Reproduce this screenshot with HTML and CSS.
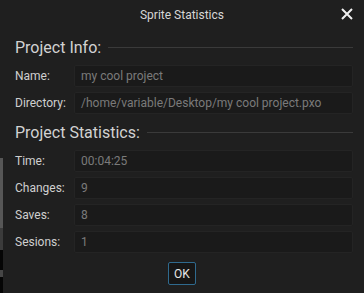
FILE: index.html
```html
<!DOCTYPE html>
<html lang="en">
<head>
    <meta charset="UTF-8">
    <meta name="viewport" content="width=device-width, initial-scale=1.0">
    <title>Sprite Statistics</title>
    <link rel="stylesheet" href="styles.css">
</head>
<body>
    <!-- Кусок окна за диалогом -->
    <div class="backdrop-edge"></div>

    <div class="dialog">
        <div class="dialog-header">
            <span class="dialog-title">Sprite Statistics</span>
            <svg class="close-btn" width="12" height="12" viewBox="0 0 12 12">
                <path d="M1 1 L11 11 M11 1 L1 11" stroke="#f0f0f0" stroke-width="2"/>
            </svg>
        </div>

        <div class="dialog-body">
            <div class="section-title"><span>Project Info:</span></div>
            <div class="field-list">
                <div class="field">
                    <div class="field-label">Name:</div>
                    <div class="field-value">my cool project</div>
                </div>
                <div class="field">
                    <div class="field-label">Directory:</div>
                    <div class="field-value">/home/variable/Desktop/my cool project.pxo</div>
                </div>
            </div>

            <div class="section-title"><span>Project Statistics:</span></div>
            <div class="field-list">
                <div class="field">
                    <div class="field-label">Time:</div>
                    <div class="field-value">00:04:25</div>
                </div>
                <div class="field">
                    <div class="field-label">Changes:</div>
                    <div class="field-value">9</div>
                </div>
                <div class="field">
                    <div class="field-label">Saves:</div>
                    <div class="field-value">8</div>
                </div>
                <div class="field">
                    <div class="field-label">Sesions:</div>
                    <div class="field-value">1</div>
                </div>
            </div>

            <div class="dialog-footer">
                <button class="ok-btn">OK</button>
            </div>
        </div>
    </div>
</body>
</html>
```

FILE: styles.css
```css
:root {
    --bg: #1f1f1f;
    --field-bg: #1a1a1a;
    --field-border: #242424;
    --line: #3a3a3a;
    --text: #cfcfcf;
    --text-muted: #7a7a7a;
    --accent: #2f6a8e;
}

* {
    margin: 0;
    padding: 0;
    box-sizing: border-box;
}

body {
    font-family: Roboto, 'Noto Sans', sans-serif;
    background: var(--bg);
    color: var(--text);
    width: 364px;
    height: 293px;
    overflow: hidden;
    position: relative;
}

.backdrop-edge {
    position: absolute;
    left: 0;
    top: 158px;
    width: 3px;
    height: 135px;
    background: linear-gradient(to bottom,
        #565656 0, #565656 70px,
        #3b3b3b 70px, #3b3b3b 92px,
        #050505 92px, #050505 112px,
        #464646 112px, #464646 119px,
        #050505 119px);
}

.dialog-header {
    height: 30px;
    display: flex;
    align-items: center;
    justify-content: center;
    position: relative;
}

.dialog-title {
    font-size: 12px;
    color: #d6d6d6;
}

.close-btn {
    position: absolute;
    right: 11px;
    top: 8px;
}

.dialog-body {
    padding: 7px 11px 0 15px;
}

.section-title {
    display: flex;
    align-items: center;
    gap: 7px;
    height: 20px;
    font-size: 16px;
    color: #d2d2d2;
    margin-bottom: 8px;
}

.section-title::after {
    content: '';
    flex: 1;
    height: 1px;
    background: var(--line);
}

.field-list {
    display: flex;
    flex-direction: column;
    gap: 5px;
    margin-bottom: 8px;
}

.field {
    display: grid;
    grid-template-columns: 59px 1fr;
    align-items: center;
    height: 22px;
}

.field-label {
    font-size: 12px;
    color: var(--text);
}

.field-value {
    height: 22px;
    line-height: 20px;
    padding: 0 6px;
    font-size: 12px;
    color: var(--text-muted);
    background: var(--field-bg);
    border: 1px solid var(--field-border);
    border-radius: 2px;
    white-space: nowrap;
    overflow: hidden;
}

.dialog-footer {
    display: flex;
    justify-content: center;
    padding-top: 1px;
    padding-right: 4px;
}

.ok-btn {
    width: 28px;
    height: 23px;
    font-family: inherit;
    font-size: 12px;
    color: #e6e6e6;
    background: #161616;
    border: 1px solid var(--accent);
    border-radius: 2px;
}
```
